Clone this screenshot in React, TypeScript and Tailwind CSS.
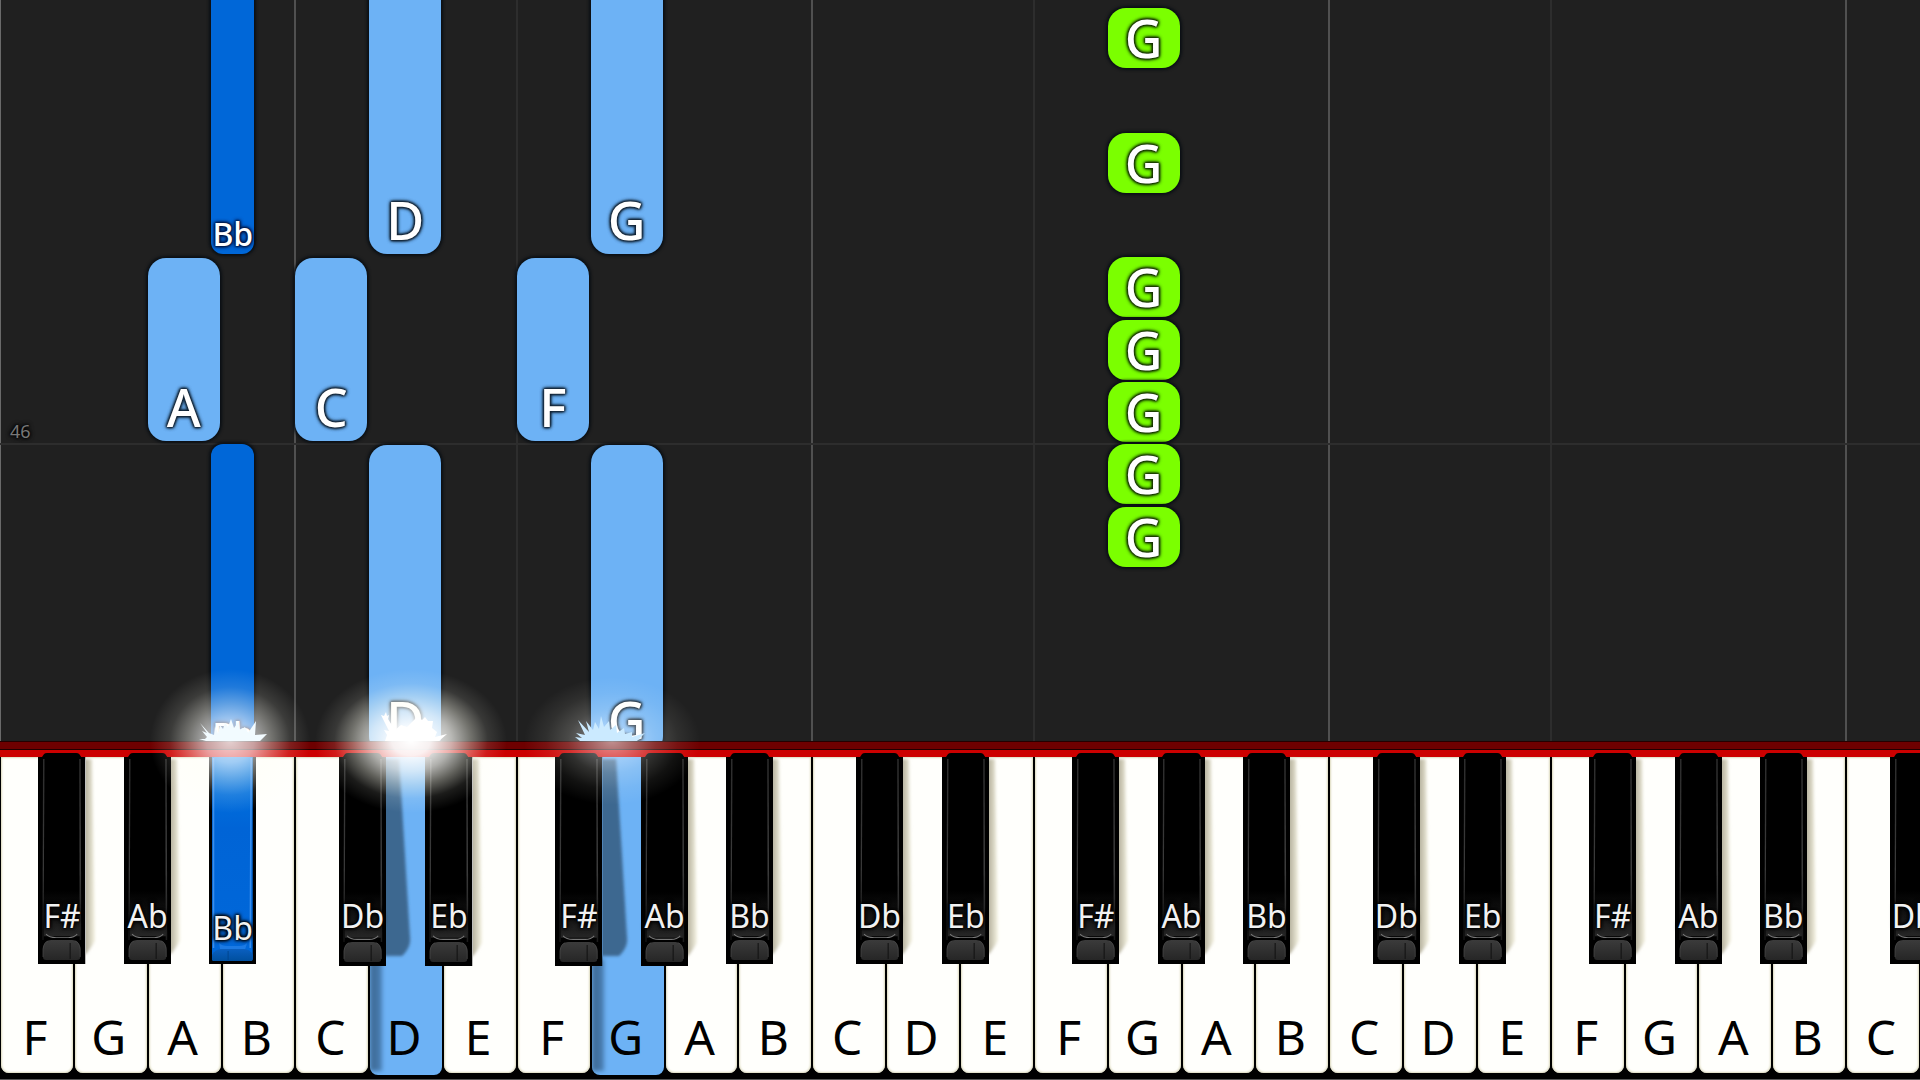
import React from 'react';
import clsx from 'clsx';

const WHITE_COUNT = 26;
const OCTAVE = ['F', 'G', 'A', 'B', 'C', 'D', 'E'];

// black key that sits on the right edge of each white key
const SHARPS: Record<string, { label: string; position: string }> = {
  F: { label: 'F#', position: 'left-[52%]' },
  G: { label: 'Ab', position: 'left-[68%]' },
  A: { label: 'Bb', position: 'left-[83%]' },
  C: { label: 'Db', position: 'left-[59%]' },
  D: { label: 'Eb', position: 'left-[76%]' },
};

const PRESSED_WHITE = [5, 8];
const PRESSED_BLACK = [2];

type NoteKind = 'white' | 'black' | 'right';

type Note = {
  label: string;
  // white key index, black notes use a fractional slot
  slot: number;
  bottom: number;
  height: number;
  kind: NoteKind;
};

const notes: Note[] = [
  { label: 'Bb', slot: 2.86, bottom: 487, height: 300, kind: 'black' },
  { label: 'D', slot: 5, bottom: 487, height: 300, kind: 'white' },
  { label: 'G', slot: 8, bottom: 487, height: 300, kind: 'white' },
  { label: 'A', slot: 2, bottom: 300, height: 183, kind: 'white' },
  { label: 'C', slot: 4, bottom: 300, height: 183, kind: 'white' },
  { label: 'F', slot: 7, bottom: 300, height: 183, kind: 'white' },
  { label: 'Bb', slot: 2.86, bottom: -13, height: 310, kind: 'black' },
  { label: 'D', slot: 5, bottom: -13, height: 309, kind: 'white' },
  { label: 'G', slot: 8, bottom: -13, height: 309, kind: 'white' },
  ...[673, 548, 424, 361, 299, 237, 174].map((bottom) => ({
    label: 'G',
    slot: 15,
    bottom,
    height: 60,
    kind: 'right' as NoteKind,
  })),
];

const noteStyles: Record<NoteKind, string> = {
  white:
    'w-[3.75%] rounded-[18px] bg-[#6db2f5] pb-2 text-[52px] [text-shadow:0_0_2px_#123,0_0_2px_#123,0_0_3px_#123,0_0_3px_#123,0_0_4px_#123,0_0_4px_#123]',
  black:
    'w-[2.25%] rounded-xl bg-[#0067d8] pb-1 text-[32px] [text-shadow:0_0_2px_#001540,0_0_2px_#001540,0_0_3px_#001540,0_0_4px_#001540,0_0_4px_#001540]',
  right:
    'w-[3.75%] rounded-[18px] bg-[#7bff00] pb-1 text-[52px] [text-shadow:0_0_2px_#143000,0_0_2px_#143000,0_0_3px_#143000,0_0_3px_#143000,0_0_4px_#143000,0_0_4px_#143000]',
};

const NoteBlock: React.FC<{ note: Note }> = ({ note }) => (
  <div
    className={clsx(
      'absolute flex items-end justify-center leading-none font-medium text-white shadow-[0_0_3px_2px_#0a0f14]',
      noteStyles[note.kind]
    )}
    style={{
      left: `${(note.slot / WHITE_COUNT) * 100}%`,
      bottom: note.bottom,
      height: note.height,
    }}
  >
    {note.label}
  </div>
);

const Highway: React.FC = () => (
  <section
    aria-label="Falling notes"
    className="relative min-h-0 flex-1 overflow-hidden bg-[#202020]"
  >
    <div className="flex h-full">
      {Array.from({ length: WHITE_COUNT }, (_, i) => (
        <div
          key={i}
          className={clsx(
            'flex-1',
            i === 0 && 'border-l border-[#6a6a6a]',
            i > 0 && i % 7 === 0 && 'border-l-2 border-[#2d2d2d]',
            i % 7 === 4 && 'border-l-2 border-[#505050]'
          )}
        />
      ))}
    </div>
    <div className="absolute inset-x-0 bottom-[296px] h-0.5 bg-[#2d2d2d]" />
    <span className="absolute bottom-[300px] left-2.5 text-lg leading-5 text-[#777777] [text-shadow:0_0_3px_#000,0_0_4px_#000,0_0_5px_#000]">
      46
    </span>
    {notes.map((note, i) => (
      <NoteBlock key={i} note={note} />
    ))}
  </section>
);

const BlackKeyArt: React.FC = () => (
  <svg
    viewBox="0 0 47 212"
    preserveAspectRatio="none"
    className="absolute inset-0 h-full w-full"
    aria-hidden="true"
  >
    <defs>
      <linearGradient id="edge" x1="0" y1="0" x2="0" y2="1">
        <stop offset="0" stopColor="#2c2c2c" />
        <stop offset="0.6" stopColor="#3c3c3c" />
        <stop offset="1" stopColor="#1c1c1c" />
      </linearGradient>
      <linearGradient id="face" x1="0" y1="0" x2="0" y2="1">
        <stop offset="0" stopColor="#000" />
        <stop offset="0.75" stopColor="#000" />
        <stop offset="1" stopColor="#262626" />
      </linearGradient>
      <linearGradient id="tip" x1="0" y1="0" x2="0" y2="1">
        <stop offset="0" stopColor="#3b3b3b" />
        <stop offset="1" stopColor="#262626" />
      </linearGradient>
    </defs>
    <path d="M0 4 H4 L6 1 Q7 0 9 0 H38 Q40 0 41 1 L43 4 H47 V212 H0 Z" fill="#000" />
    <path d="M6 8 V184 H42 V8 L40 2 H8 Z" fill="url(#face)" />
    <path d="M5 6 H6.5 L5.5 188 H4.5 Z" fill="url(#edge)" />
    <path d="M41 6 H42.5 L43 188 H41.5 Z" fill="url(#edge)" />
    <path d="M8 182 Q11 185.500 18 185.500 H30 Q36 185.500 39 182" stroke="#777" strokeWidth="1" fill="none" />
    <path d="M5 205 V195 Q7 188 13 188 H34 Q40 188 42 195 V205 Q42 208 39 208 H8 Q5 208 5 205 Z" fill="url(#tip)" />
    <path d="M5 205 V197 Q6 190 10 189 M42 205 V197 Q41 190 37 189" stroke="#484848" strokeWidth="0.8" fill="none" />
    <path d="M32 191 V207" stroke="#161616" strokeWidth="1.2" />
  </svg>
);

const PressedBlackKeyArt: React.FC = () => (
  <svg
    viewBox="0 0 47 212"
    preserveAspectRatio="none"
    className="absolute inset-0 h-full w-full"
    aria-hidden="true"
  >
    <defs>
      <linearGradient id="pressedFace" x1="0" y1="0" x2="0" y2="1">
        <stop offset="0" stopColor="#0078e4" />
        <stop offset="0.35" stopColor="#0064d6" />
        <stop offset="1" stopColor="#0068da" />
      </linearGradient>
      <linearGradient id="pressedTip" x1="0" y1="0" x2="0" y2="1">
        <stop offset="0" stopColor="#0a5fc0" />
        <stop offset="1" stopColor="#004f9e" />
      </linearGradient>
    </defs>
    <path d="M0 4 H47 V212 H0 Z" fill="#000" />
    <path d="M3 4 H43.500 V207 Q43.500 209 41.500 209 H5 Q3 209 3 207 Z" fill="url(#pressedFace)" />
    <path d="M4.500 5 V196 M42 5 L41 196" stroke="#3b8eea" strokeWidth="1.5" fill="none" />
    <path d="M10 191 Q13 194 18 194 H30 Q35 194 38 191 L36 197 H11 Z" fill="#1c7ae4" />
    <path d="M3 203 Q6 197 13 197 H34 Q41 197 43.500 203 V207 Q43.500 209 41 209 H5 Q3 209 3 207 Z" fill="url(#pressedTip)" />
    <path d="M19 199 V208" stroke="#00458e" strokeWidth="1" />
  </svg>
);

const KeyShadow: React.FC<{ dark: boolean }> = ({ dark }) => (
  <svg
    viewBox="0 0 30 212"
    preserveAspectRatio="none"
    className="absolute top-0 left-full h-full w-[64%]"
    aria-hidden="true"
  >
    <defs>
      <filter id="soft" x="-20%" y="-5%" width="140%" height="110%">
        <feGaussianBlur stdDeviation="1.5" />
      </filter>
      <linearGradient id="beige" x1="0" y1="0" x2="1" y2="0">
        <stop offset="0" stopColor="#a9a592" />
        <stop offset="0.4" stopColor="#b9b5a2" />
        <stop offset="1" stopColor="#f7f5e4" />
      </linearGradient>
    </defs>
    {dark ? (
      <path d="M-6 6 H13 L24 186 Q24 194 16 202 H-6 Z" fill="#3c6790" filter="url(#soft)" />
    ) : (
      <path d="M-6 6 H6 L9 188 Q8 192 0 202 H-6 Z" fill="url(#beige)" filter="url(#soft)" />
    )}
  </svg>
);

const PianoKey: React.FC<{ index: number }> = ({ index }) => {
  const label = OCTAVE[index % 7];
  const sharp = SHARPS[label];
  const pressed = PRESSED_WHITE.includes(index);
  const sharpPressed = PRESSED_BLACK.includes(index);
  const nextPressed = PRESSED_WHITE.includes(index + 1);
  const lowered = pressed || nextPressed;

  return (
    <div className="relative flex-1">
      <div className="flex h-full px-px">
        <button
          type="button"
          aria-pressed={pressed}
          className={clsx(
            'relative flex w-full items-end justify-center overflow-hidden rounded-b-lg pr-1 text-5xl leading-none text-black',
            pressed
              ? '-mb-0.5 bg-[#6db2f5] pb-3.5'
              : 'bg-[#fffffc] pb-3 shadow-[inset_0_0_2px_1px_#dcd9bd]'
          )}
        >
          {pressed && (
            <span className="absolute bottom-1 left-0 h-28 w-3 bg-linear-to-r from-[#3c6790] to-[#4a80b5] blur-[2px]" />
          )}
          <span className="relative">{label}</span>
        </button>
      </div>
      {sharp && (
        <div
          className={clsx(
            'absolute -top-1 z-10 w-[64%]',
            sharp.position,
            lowered ? 'h-[213px]' : 'h-[211px]'
          )}
        >
          {!sharpPressed && <KeyShadow dark={nextPressed} />}
          <button
            type="button"
            aria-pressed={sharpPressed}
            className={clsx(
              'relative flex h-full w-full items-end justify-center text-[32px] leading-none text-[#f2f2f2] [text-shadow:0_0_3px_#000,0_0_3px_#000,0_0_4px_#000,0_0_5px_#000]',
              sharpPressed ? 'pb-5' : lowered ? 'pb-[34px]' : 'pb-8'
            )}
          >
            {sharpPressed ? <PressedBlackKeyArt /> : <BlackKeyArt />}
            <span className="relative">{sharp.label}</span>
          </button>
        </div>
      )}
    </div>
  );
};

const glows = [
  {
    x: 12,
    glow: 'h-36 w-40 bg-[radial-gradient(closest-side,#ffffffd0_0%,#ffffffa0_30%,#fffff560_52%,#fffff020_75%,transparent_100%)]',
    sparks: 'wide',
  },
  {
    x: 21.4,
    glow: 'h-36 w-48 bg-[radial-gradient(closest-side,#fff_0%,#fffffff0_20%,#fffffab0_42%,#fffff060_62%,#fffff01c_80%,transparent_100%)]',
    sparks: 'bright',
  },
  {
    x: 31.9,
    glow: 'h-32 w-44 bg-[radial-gradient(closest-side,#ffffff90_0%,#ffffff60_25%,#fffff530_50%,#fffff012_75%,transparent_100%)]',
    sparks: 'low',
  },
];

const Sparks: React.FC<{ shape: string }> = ({ shape }) => (
  <svg
    viewBox="0 0 80 40"
    className="absolute bottom-0 left-0 h-10 w-20 max-w-none -translate-x-1/2"
    aria-hidden="true"
  >
    {shape === 'wide' && (
      <path
        d="M16 40 L9 38 L15 38 L17 36 L12 30 L17 32 L10 22 L19 32 L24 34 L25 25 L28 33 L30 24 L33 28 L35 22 L38 26 L41 18 L44 27 L49 20 L50 29 L55 26 L58 32 L66 20 L65 34 L77 33 L70 40 Z"
        fill="#f2fbff"
      />
    )}
    {shape === 'bright' && (
      <path
        d="M14 40 L16 34 L13 29 L18 30 L12 18 L10 14 L13 15 L15 11 L16 15 L18 14 L17 18 L24 29 L30 24 L36 26 L41 21 L46 16 L51 19 L54 16 L57 20 L62 20 L61 27 L66 31 L64 36 L76 33 L68 40 Z"
        fill="#ffffff"
      />
    )}
    {shape === 'low' && (
      <path
        d="M8 40 L3 36 L10 37 L4 32 L13 34 L6 19 L17 31 L14 20 L21 29 L23 21 L27 28 L29 15 L32 26 L37 20 L38 29 L44 24 L45 32 L52 27 L53 33 L60 31 L60 36 L73 32 L65 40 Z"
        fill="#cbeaff"
      />
    )}
  </svg>
);

const Rail: React.FC = () => (
  <div className="relative flex h-4 flex-col">
    <div className="h-2 border-t border-[#250000] bg-[#6e0000]" />
    <div className="h-px bg-[#200000]" />
    <div className="flex-1 bg-[#cc0000]" />
  </div>
);

const Glows: React.FC = () => (
  <div className="pointer-events-none relative z-20 h-0">
    {glows.map(({ x, glow, sparks }) => (
      <div key={x} className="absolute top-0 h-0 w-0" style={{ left: `${x}%` }}>
        <div className={clsx('absolute -translate-x-1/2 -translate-y-1/2', glow)} />
        <Sparks shape={sparks} />
      </div>
    ))}
  </div>
);

const App: React.FC = () => {
  return (
    <main className="flex h-screen w-full flex-col overflow-hidden bg-black font-['Noto_Sans',sans-serif]">
      <Highway />
      <Glows />
      <Rail />
      <section
        aria-label="Keyboard"
        className="relative flex h-[323px] border-b border-[#555555] bg-black pb-1.5"
      >
        {Array.from({ length: WHITE_COUNT }, (_, i) => (
          <PianoKey key={i} index={i} />
        ))}
      </section>
    </main>
  );
};

export default App;
